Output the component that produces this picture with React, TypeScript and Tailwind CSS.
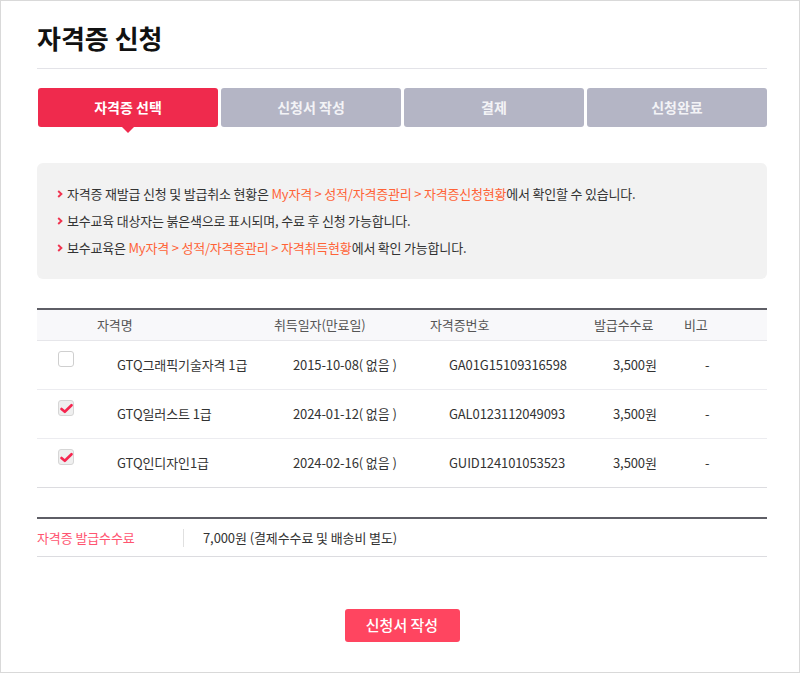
import React from "react";

const font = { fontFamily: '"Noto Sans CJK KR", "Noto Sans", sans-serif' };

const steps = ["자격증 선택", "신청서 작성", "결제", "신청완료"];

const rows = [
  { name: "GTQ그래픽기술자격 1급", date: "2015-10-08( 없음 )", no: "GA01G15109316598", fee: "3,500원", note: "-", checked: false },
  { name: "GTQ일러스트 1급", date: "2024-01-12( 없음 )", no: "GAL0123112049093", fee: "3,500원", note: "-", checked: true },
  { name: "GTQ인디자인1급", date: "2024-02-16( 없음 )", no: "GUID124101053523", fee: "3,500원", note: "-", checked: true },
];

const cols = "grid grid-cols-[60px_177px_156px_164px_90px_1fr]";

function Check({ on }: { on: boolean }) {
  return (
    <span
      className={`flex h-[16px] w-[16px] items-center justify-center rounded-[3px] border ${
        on ? "border-[#d6d6d6] bg-[#efefef]" : "border-[#cfcfcf] bg-white"
      }`}
    >
      {on && (
        <svg width="13" height="11" viewBox="0 0 13 11">
          <path d="M1.5 6 L4.8 8.8 L11.5 2.2" fill="none" stroke="#f5264f" strokeWidth="2.6" strokeLinecap="round" strokeLinejoin="round" />
        </svg>
      )}
    </span>
  );
}

function Bullet({ children }: { children: React.ReactNode }) {
  return (
    <li className="flex items-center leading-[27px]">
      <svg width="6" height="8" viewBox="0 0 6 8" className="mr-[4px] mt-[1px]">
        <path d="M1.2 1 L4.4 4 L1.2 7" fill="none" stroke="#f0334f" strokeWidth="1.9" />
      </svg>
      <span>{children}</span>
    </li>
  );
}

export default function App() {
  return (
    <div style={font} className="h-[673px] w-[800px] border border-[#d9d9d9] bg-white pl-[36px] pr-[32px] text-[#333]">
      <h1 className="pt-[19px] text-[26px] font-bold leading-[36px] text-[#111]">자격증 신청</h1>
      <div className="mt-[12px] border-b border-[#e3e3e8]" />

      <div className="mt-[19px] flex gap-[3px] pl-[1px]">
        {steps.map((s, i) => (
          <div
            key={s}
            className={`relative flex h-[39px] flex-1 items-center justify-center rounded-[3px] text-[14px] font-semibold ${
              i === 0 ? "bg-[#ef2a4d] text-white" : "bg-[#b4b5c5] text-[#f3f3f6]"
            }`}
          >
            {s}
            {i === 0 && (
              <span className="absolute left-1/2 top-full -translate-x-1/2 border-x-[6px] border-t-[6px] border-x-transparent border-t-[#ef2a4d]" />
            )}
          </div>
        ))}
      </div>

      <ul className="mt-[36px] rounded-[6px] bg-[#f2f2f2] pb-[18px] pl-[20px] pt-[17px] text-[13px] tracking-[-0.2px] text-[#333]">
        <Bullet>
          자격증 재발급 신청 및 발급취소 현황은{" "}
          <span className="text-[#ff6337]">My자격 &gt; 성적/자격증관리 &gt; 자격증신청현황</span>에서 확인할 수 있습니다.
        </Bullet>
        <Bullet>보수교육 대상자는 붉은색으로 표시되며, 수료 후 신청 가능합니다.</Bullet>
        <Bullet>
          보수교육은 <span className="text-[#ff6337]">My자격 &gt; 성적/자격증관리 &gt; 자격취득현황</span>에서 확인 가능합니다.
        </Bullet>
      </ul>

      <div className="mt-[29px] border-t-2 border-[#5e5e66] text-[13px] tracking-[-0.1px]">
        <div className={`${cols} h-[31px] items-center border-b border-[#e6e6ea] bg-[#f8f8fa] text-[#555]`}>
          <span />
          <span>자격명</span>
          <span>취득일자(만료일)</span>
          <span>자격증번호</span>
          <span>발급수수료</span>
          <span>비고</span>
        </div>
        {rows.map((r, i) => (
          <div
            key={r.no}
            className={`${cols} h-[49px] items-center ${i === rows.length - 1 ? "border-b border-[#dcdce0]" : "border-b border-[#ececf0]"}`}
          >
            <span className="-mt-[12px] pl-[21px]">
              <Check on={r.checked} />
            </span>
            <span className="pl-[20px]">{r.name}</span>
            <span className="pl-[19px]">{r.date}</span>
            <span className="pl-[19px]">{r.no}</span>
            <span className="pl-[19px]">{r.fee}</span>
            <span className="pl-[21px]">{r.note}</span>
          </div>
        ))}
      </div>

      <div className="mt-[29px] flex h-[40px] items-center border-b border-t-2 border-[#dcdce0] border-t-[#5e5e66] text-[13px] tracking-[-0.1px]">
        <span className="w-[146px] text-[#ff5470]">자격증 발급수수료</span>
        <span className="h-[18px] border-l border-[#e0e0e0]" />
        <span className="pl-[19px] text-[#333]">7,000원 (결제수수료 및 배송비 별도)</span>
      </div>

      <div className="mt-[52px] flex justify-center">
        <button className="h-[33px] w-[115px] rounded-[3px] bg-[#ff4560] text-[15px] font-medium text-white">신청서 작성</button>
      </div>
    </div>
  );
}
